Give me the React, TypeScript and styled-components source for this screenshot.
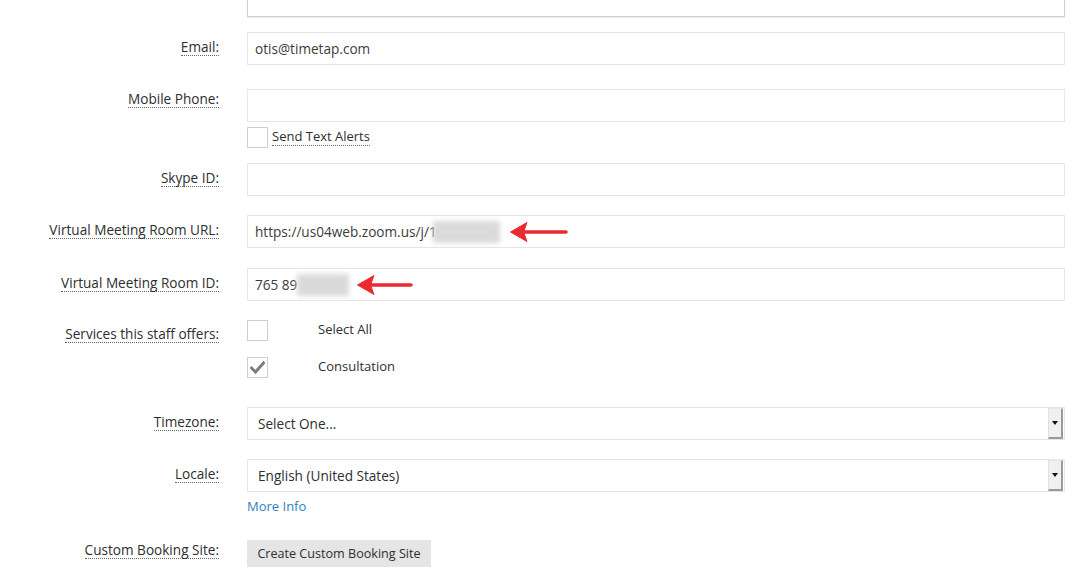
import React from "react";
import styled, { createGlobalStyle } from "styled-components";

const Global = createGlobalStyle`
  html, body { margin: 0; padding: 0; background: #fff; }
  body { font-family: "Open Sans", "Noto Sans", sans-serif; font-size: 13px; color: #333; overflow: hidden; }
`;

const Form = styled.div`
  display: flex;
  flex-direction: column;
  width: 1091px;
`;

const Row = styled.div<{ $mt: number }>`
  display: grid;
  grid-template-columns: 219px 1fr;
  column-gap: 28px;
  padding-right: 26px;
  margin-top: ${(p) => p.$mt}px;
  align-items: start;
`;

const LabelCell = styled.div<{ $pt?: number }>`
  display: flex;
  justify-content: flex-end;
  padding-top: ${(p) => (p.$pt ?? 6)}px;
`;

const Label = styled.span`
  font-size: 13.6px;
  line-height: 17px;
  color: #2e2e2e;
  border-bottom: 1px dotted #666;
  white-space: nowrap;
`;

const Field = styled.div`
  display: flex;
  flex-direction: column;
  min-width: 0;
`;

const TextBox = styled.div<{ $strong?: boolean }>`
  box-sizing: border-box;
  height: 33px;
  border: 1px solid ${(p) => (p.$strong ? "#cfcfcf" : "#e6e6e6")};
  box-shadow: ${(p) => (p.$strong ? "0 1px 1px rgba(0,0,0,0.08)" : "none")};
  background: #fff;
  display: flex;
  align-items: center;
  padding-left: 7px;
  font-size: 13.6px;
  color: #3c3c3c;
  white-space: nowrap;
`;

const Blur = styled.span<{ $w: number; $ml?: number }>`
  display: inline-block;
  width: ${(p) => p.$w}px;
  height: 22px;
  margin-left: ${(p) => p.$ml ?? 0}px;
  background: #dadada;
  filter: blur(2.5px);
`;

const ArrowWrap = styled.span<{ $ml: number }>`
  display: inline-flex;
  margin-left: ${(p) => p.$ml}px;
`;

const CheckLine = styled.div<{ $mt?: number; $gap: number }>`
  display: flex;
  align-items: center;
  gap: ${(p) => p.$gap}px;
  margin-top: ${(p) => p.$mt ?? 0}px;
`;

const Box = styled.span`
  box-sizing: border-box;
  width: 21px;
  height: 21px;
  border: 1px solid #cfcfcf;
  background: #fff;
  display: inline-flex;
  align-items: center;
  justify-content: center;
  flex: none;
`;

const CheckText = styled.span<{ $dotted?: boolean }>`
  font-size: 13px;
  line-height: 17px;
  color: #2e2e2e;
  margin-top: -2px;
  border-bottom: ${(p) => (p.$dotted ? "1px dotted #666" : "none")};
`;

const Select = styled.div`
  box-sizing: border-box;
  height: 33px;
  border: 1px solid #e6e6e6;
  background: #fff;
  display: flex;
  align-items: center;
  padding-left: 10px;
  padding-right: 1px;
  font-size: 13.6px;
  color: #2e2e2e;
`;

const SelectText = styled.span`
  flex: 1;
`;

const DropBtn = styled.span`
  box-sizing: border-box;
  width: 15px;
  height: 31px;
  background: #f0f0f0;
  border-left: 1px solid #e0e0e0;
  border-top: 1px solid #e8e8e8;
  border-right: 2px solid #9a9a9a;
  border-bottom: 2px solid #9a9a9a;
  display: flex;
  align-items: center;
  justify-content: center;
`;

const Tri = styled.span`
  width: 0;
  height: 0;
  border-left: 3px solid transparent;
  border-right: 3px solid transparent;
  border-top: 4px solid #111;
`;

const MoreInfo = styled.a`
  margin-top: 5px;
  font-size: 13px;
  line-height: 18px;
  color: #2f7fc4;
  text-decoration: none;
  align-self: flex-start;
`;

const Button = styled.button`
  align-self: flex-start;
  box-sizing: border-box;
  height: 27px;
  width: 184px;
  border: none;
  background: #e5e5e5;
  font-family: "Open Sans", "Noto Sans", sans-serif;
  font-size: 12.6px;
  color: #2e2e2e;
  padding: 0;
`;

const RedArrow = ({ w }: { w: number }) => (
  <svg width={w} height={22} viewBox={`0 0 ${w} 22`}>
    <line x1={12} y1={11} x2={w - 2} y2={11} stroke="#ea2a2f" strokeWidth={3.5} strokeLinecap="round" />
    <path d="M0.5 11 L17 1.5 L13.5 11 L17 20.5 Z" fill="#ea2a2f" stroke="#ea2a2f" strokeWidth={1} strokeLinejoin="round" />
  </svg>
);

const Check = () => (
  <svg width={15} height={13} viewBox="0 0 15 13">
    <path d="M1.5 7 L5.5 11 L13.5 2" fill="none" stroke="#7d7d7d" strokeWidth={3} strokeLinecap="square" />
  </svg>
);

export default function App() {
  return (
    <>
      <Global />
      <Form>
        <Row $mt={-16}>
          <div />
          <Field>
            <TextBox $strong />
          </Field>
        </Row>

        <Row $mt={15}>
          <LabelCell $pt={6}>
            <Label>Email:</Label>
          </LabelCell>
          <Field>
            <TextBox>otis@timetap.com</TextBox>
          </Field>
        </Row>

        <Row $mt={24}>
          <LabelCell $pt={1}>
            <Label>Mobile Phone:</Label>
          </LabelCell>
          <Field>
            <TextBox />
            <CheckLine $mt={5} $gap={4}>
              <Box />
              <CheckText $dotted>Send Text Alerts</CheckText>
            </CheckLine>
          </Field>
        </Row>

        <Row $mt={15}>
          <LabelCell>
            <Label>Skype ID:</Label>
          </LabelCell>
          <Field>
            <TextBox />
          </Field>
        </Row>

        <Row $mt={19}>
          <LabelCell>
            <Label>Virtual Meeting Room URL:</Label>
          </LabelCell>
          <Field>
            <TextBox>
              https://us04web.zoom.us/j/1
              <Blur $w={67} $ml={-4} />
              <ArrowWrap $ml={10}>
                <RedArrow w={58} />
              </ArrowWrap>
            </TextBox>
          </Field>
        </Row>

        <Row $mt={20}>
          <LabelCell>
            <Label>Virtual Meeting Room ID:</Label>
          </LabelCell>
          <Field>
            <TextBox>
              765 89
              <Blur $w={52} />
              <ArrowWrap $ml={8}>
                <RedArrow w={56} />
              </ArrowWrap>
            </TextBox>
          </Field>
        </Row>

        <Row $mt={19}>
          <LabelCell $pt={5}>
            <Label>Services this staff offers:</Label>
          </LabelCell>
          <Field>
            <CheckLine $gap={50}>
              <Box />
              <CheckText>Select All</CheckText>
            </CheckLine>
            <CheckLine $mt={16} $gap={50}>
              <Box>
                <Check />
              </Box>
              <CheckText>Consultation</CheckText>
            </CheckLine>
          </Field>
        </Row>

        <Row $mt={29}>
          <LabelCell>
            <Label>Timezone:</Label>
          </LabelCell>
          <Field>
            <Select>
              <SelectText>Select One...</SelectText>
              <DropBtn>
                <Tri />
              </DropBtn>
            </Select>
          </Field>
        </Row>

        <Row $mt={19}>
          <LabelCell>
            <Label>Locale:</Label>
          </LabelCell>
          <Field>
            <Select>
              <SelectText>English (United States)</SelectText>
              <DropBtn>
                <Tri />
              </DropBtn>
            </Select>
            <MoreInfo href="#">More Info</MoreInfo>
          </Field>
        </Row>

        <Row $mt={25}>
          <LabelCell $pt={1}>
            <Label>Custom Booking Site:</Label>
          </LabelCell>
          <Field>
            <Button>Create Custom Booking Site</Button>
          </Field>
        </Row>
      </Form>
    </>
  );
}
